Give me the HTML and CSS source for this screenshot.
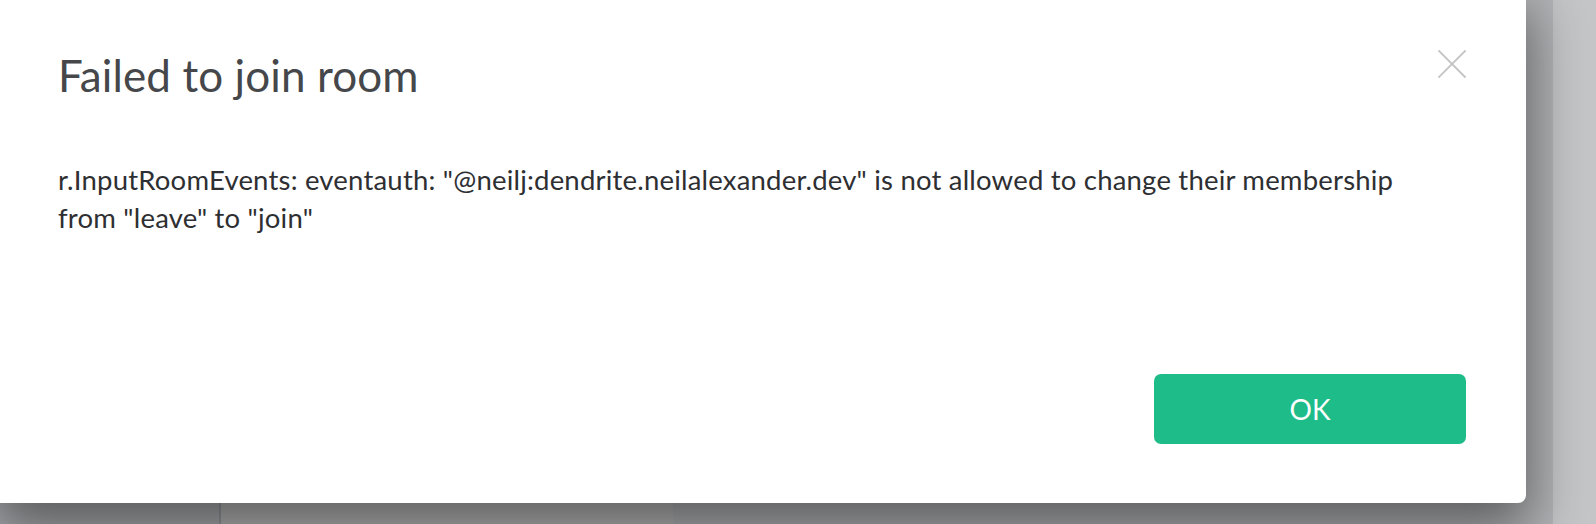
FILE: index.html
```html
<!DOCTYPE html>
<html lang="en">
<head>
<meta charset="utf-8">
<title>Failed to join room</title>
<link rel="stylesheet" href="styles.css">
</head>
<body>
<div class="backdrop">
  <div class="col col-left"></div>
  <div class="col col-divider"></div>
  <div class="col col-mid"></div>
  <div class="col col-main"></div>
  <div class="col col-right"></div>
</div>
<div class="dialog" role="dialog">
  <div class="dialog-header">
    <h2 class="dialog-title">Failed to join room</h2>
    <button class="dialog-close" aria-label="Close">
      <svg width="28" height="28" viewBox="0 0 28 28"><path d="M1 1 L27 27 M27 1 L1 27" stroke="#c4c4c4" stroke-width="1.8" fill="none" stroke-linecap="square"/></svg>
    </button>
  </div>
  <div class="dialog-content">r.InputRoomEvents: eventauth: "@neilj:dendrite.neilalexander.dev" is not allowed to change their membership from "leave" to "join"</div>
  <div class="dialog-buttons">
    <button class="btn-primary">OK</button>
  </div>
</div>
</body>
</html>
```
FILE: styles.css
```css
html, body {
  margin: 0;
  padding: 0;
  width: 1596px;
  height: 524px;
  overflow: hidden;
}
body {
  position: relative;
  font-family: "Lato", "Noto Sans", sans-serif;
  background: #b4b5b8;
}
.backdrop {
  display: flex;
  height: 524px;
}
.col { height: 100%; }
.col-left { width: 219px; background: #adaeb2; }
.col-divider { width: 2px; background: #9a9ba1; }
.col-mid { width: 452px; background: #b9b9b9; }
.col-main { flex: 1; background: #b3b4b7; }
.col-right { width: 43px; background: #c4c5c7; }

.dialog {
  position: absolute;
  left: -12px;
  top: -20px;
  width: 1538px;
  box-sizing: border-box;
  background: #ffffff;
  border-radius: 8px;
  padding: 69px 60px 59px 70px;
  box-shadow: 4px 27px 54px 0 rgba(0, 0, 0, 0.48);
}
.dialog-header {
  display: flex;
  justify-content: space-between;
  align-items: flex-start;
}
.dialog-title {
  margin: 0;
  font-size: 44px;
  font-weight: 400;
  line-height: 1.2;
  letter-spacing: 0.1px;
  color: #45474a;
}
.dialog-close {
  margin: 1px 0 0;
  padding: 0;
  border: 0;
  background: none;
  width: 28px;
  height: 28px;
  display: block;
}
.dialog-close svg { display: block; }
.dialog-content {
  margin-top: 59px;
  padding-right: 40px;
  font-size: 27.5px;
  line-height: 38px;
  letter-spacing: 0.2px;
  color: #2e2f32;
}
.dialog-buttons {
  margin-top: 137px;
  display: flex;
  justify-content: flex-end;
}
.btn-primary {
  width: 312px;
  height: 70px;
  border: 0;
  border-radius: 7px;
  background: #1ebc89;
  color: #ffffff;
  font-family: "Lato", "Noto Sans", sans-serif;
  font-size: 28px;
  padding: 0;
}
```
